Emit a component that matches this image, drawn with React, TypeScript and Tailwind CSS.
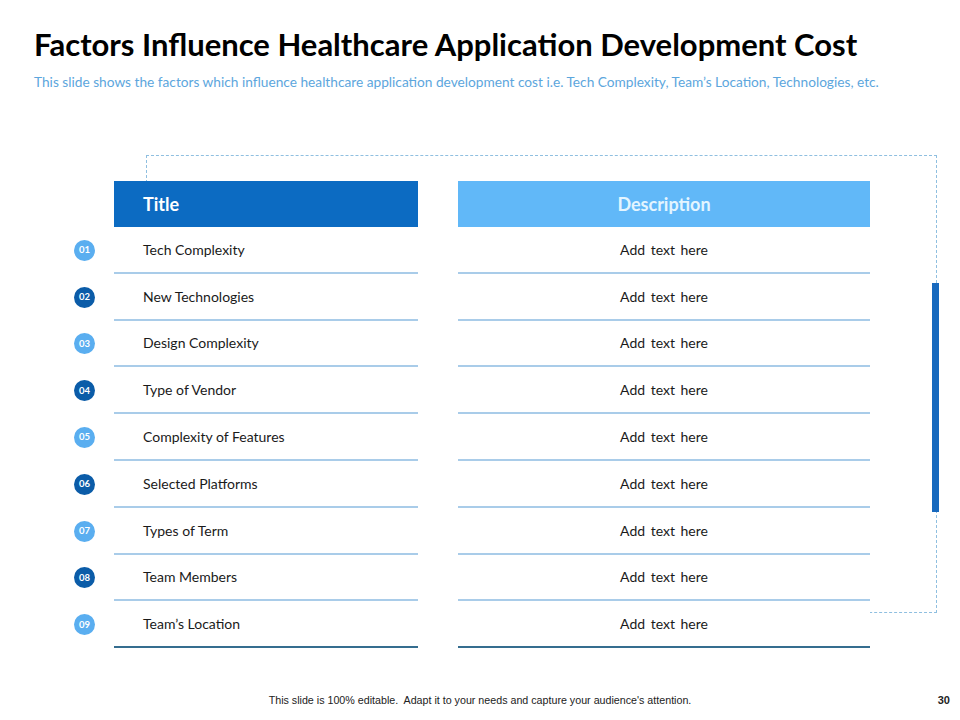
import React from "react";

const rows = [
  "Tech Complexity",
  "New Technologies",
  "Design Complexity",
  "Type of Vendor",
  "Complexity of Features",
  "Selected Platforms",
  "Types of Term",
  "Team Members",
  "Team\u2019s Location",
];

export default function App() {
  return (
    <div className="w-[960px] h-[720px] bg-white overflow-hidden flex flex-col font-['Lato',sans-serif]">
      <div className="pt-[25px] pl-[34px]">
        <h1 className="text-[31px] font-bold leading-[38px] text-black">
          Factors Influence Healthcare Application Development Cost
        </h1>
        <p className="mt-[10px] text-[13.7px] leading-[17px] text-[#5ca6dd]">
          This slide shows the factors which influence healthcare application development cost i.e. Tech Complexity, Team’s Location, Technologies, etc.
        </p>
      </div>

      <div className="relative mt-[65px] pt-[26px]">
        <div className="absolute left-[146px] top-0 w-[791px] h-[458px] border border-dashed border-[#8fbfe0]" />
        <div className="absolute left-[932px] top-[128px] w-[7px] h-[229px] bg-[#1769be]" />

        <div className="relative flex flex-col">
          <div className="flex">
            <div className="w-[114px]" />
            <div className="flex bg-white">
              <div className="w-[304px] h-[46px] bg-[#0c6bc2] flex items-center pl-[29px] text-white font-bold text-[18px]">
                Title
              </div>
              <div className="w-[40px]" />
              <div className="w-[412px] h-[46px] bg-[#61b8f8] flex items-center justify-center text-[#e4f5ff] font-bold text-[18px]">
                Description
              </div>
            </div>
          </div>
          {rows.map((r, i) => {
            const last = i === rows.length - 1;
            const lineCls = last ? "border-b-[2px] border-[#356d8f]" : "border-b-[2px] border-[#a9cce9]";
            return (
              <div key={r} className="flex">
                <div className="w-[114px] flex items-center pl-[74px]">
                  <div
                    className={
                      "w-[21px] h-[21px] rounded-full flex items-center justify-center text-white text-[9.5px] font-bold " +
                      (i % 2 === 0 ? "bg-[#5aaef0]" : "bg-[#0b5ca8]")
                    }
                  >
                    {String(i + 1).padStart(2, "0")}
                  </div>
                </div>
                <div className="flex bg-white">
                  <div className={"w-[304px] h-[46.8px] flex items-center pl-[29px] text-[14px] text-[#1a1a1a] " + lineCls}>
                    {r}
                  </div>
                  <div className="w-[40px]" />
                  <div className={"w-[412px] h-[46.8px] flex items-center justify-center text-[14px] text-[#1a1a1a] [word-spacing:2px] " + lineCls}>
                    Add text here
                  </div>
                </div>
              </div>
            );
          })}
        </div>
      </div>

      <div className="mt-auto mb-[12px] grid grid-cols-[1fr_auto_1fr] items-center font-['Liberation_Sans',sans-serif]">
        <div />
        <div className="text-[10.7px] text-[#222]">
          This slide is 100% editable.&nbsp; Adapt it to your needs and capture your audience's attention.
        </div>
        <div className="flex justify-end pr-[10px] text-[11px] font-bold text-[#222]">30</div>
      </div>
    </div>
  );
}
